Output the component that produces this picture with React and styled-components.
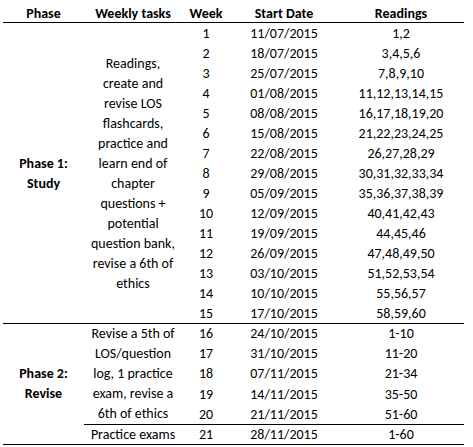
import React from "react"
import styled, { createGlobalStyle } from "styled-components"

const Global = createGlobalStyle`
  html, body {
    margin: 0;
    padding: 0;
    background: #fff;
  }
  body {
    font-family: Calibri, Carlito, Lato, "Liberation Sans", sans-serif;
    color: #000;
  }
`

const Sheet = styled.table`
  margin-left: 3px;
  width: 461px;
  table-layout: fixed;
  border-collapse: separate;
  border-spacing: 0;
  border-bottom: 1px solid #000;
  font-size: 14px;
`

const HeadCell = styled.th`
  padding: 6px 0 0;
  line-height: 16px;
  font-weight: 700;
  text-align: center;
  white-space: nowrap;
  border-bottom: 1px solid #000;
`

const Cell = styled.td`
  padding: 1px 0 0;
  line-height: 19px;
  text-align: center;
  vertical-align: middle;
  white-space: nowrap;
  font-weight: ${p => (p.$bold ? 700 : 400)};
  box-shadow: ${p => (p.$rule ? "inset 0 1px 0 #000" : "none")};
`

const Block = styled.div`
  line-height: 20px;
`

const cols = [81, 98, 48, 108, 126]

const study = [
  ["11/07/2015", "1,2"],
  ["18/07/2015", "3,4,5,6"],
  ["25/07/2015", "7,8,9,10"],
  ["01/08/2015", "11,12,13,14,15"],
  ["08/08/2015", "16,17,18,19,20"],
  ["15/08/2015", "21,22,23,24,25"],
  ["22/08/2015", "26,27,28,29"],
  ["29/08/2015", "30,31,32,33,34"],
  ["05/09/2015", "35,36,37,38,39"],
  ["12/09/2015", "40,41,42,43"],
  ["19/09/2015", "44,45,46"],
  ["26/09/2015", "47,48,49,50"],
  ["03/10/2015", "51,52,53,54"],
  ["10/10/2015", "55,56,57"],
  ["17/10/2015", "58,59,60"],
]

const revise = [
  ["24/10/2015", "1-10"],
  ["31/10/2015", "11-20"],
  ["07/11/2015", "21-34"],
  ["14/11/2015", "35-50"],
  ["21/11/2015", "51-60"],
]

const studyTasks = [
  "Readings,", "create and", "revise LOS", "flashcards,", "practice and",
  "learn end of", "chapter", "questions +", "potential", "question bank,",
  "revise a 6th of", "ethics",
]

const reviseTasks = [
  "Revise a 5th of", "LOS/question", "log, 1 practice", "exam, revise a", "6th of ethics",
]

function Lines({ items }) {
  return (
    <Block>
      {items.map((t, i) => <div key={i}>{t}</div>)}
    </Block>
  )
}

export default function App() {
  return (
    <>
      <Global />
      <Sheet>
        <colgroup>
          {cols.map((w, i) => <col key={i} style={{ width: w }} />)}
        </colgroup>
        <thead>
          <tr>
            <HeadCell>Phase</HeadCell>
            <HeadCell>Weekly tasks</HeadCell>
            <HeadCell>Week</HeadCell>
            <HeadCell>Start Date</HeadCell>
            <HeadCell>Readings</HeadCell>
          </tr>
        </thead>
        <tbody>
          {study.map((r, i) => (
            <tr key={"s" + i}>
              {i === 0 && (
                <>
                  <Cell rowSpan={15} $bold><Lines items={["Phase 1:", "Study"]} /></Cell>
                  <Cell rowSpan={15}><Lines items={studyTasks} /></Cell>
                </>
              )}
              <Cell>{i + 1}</Cell>
              <Cell>{r[0]}</Cell>
              <Cell>{r[1]}</Cell>
            </tr>
          ))}
          {revise.map((r, i) => (
            <tr key={"r" + i}>
              {i === 0 && (
                <>
                  <Cell rowSpan={6} $bold $rule><Lines items={["Phase 2:", "Revise"]} /></Cell>
                  <Cell rowSpan={5} $rule><Lines items={reviseTasks} /></Cell>
                </>
              )}
              <Cell $rule={i === 0}>{i + 16}</Cell>
              <Cell $rule={i === 0}>{r[0]}</Cell>
              <Cell $rule={i === 0}>{r[1]}</Cell>
            </tr>
          ))}
          <tr>
            <Cell $rule>Practice exams</Cell>
            <Cell $rule>21</Cell>
            <Cell $rule>28/11/2015</Cell>
            <Cell $rule>1-60</Cell>
          </tr>
        </tbody>
      </Sheet>
    </>
  )
}
